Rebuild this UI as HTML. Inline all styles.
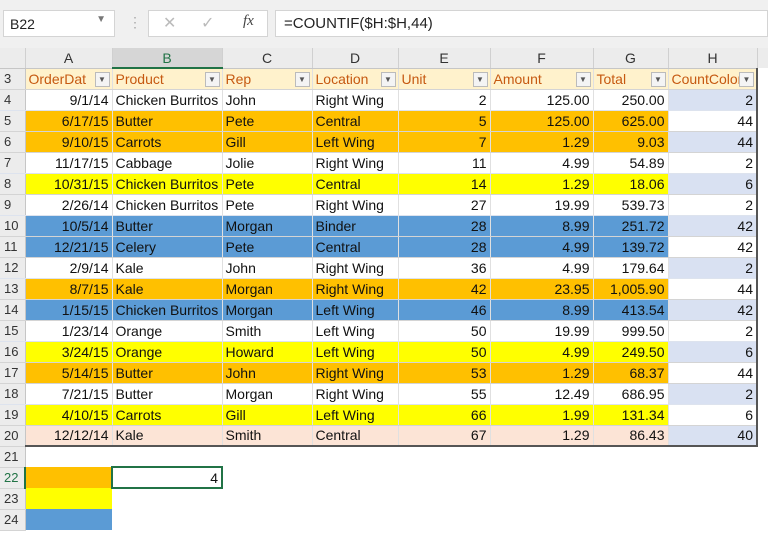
<!DOCTYPE html>
<html><head><meta charset="utf-8"><style>
*{margin:0;padding:0;box-sizing:border-box}
body{width:768px;height:538px;background:#fff;font-family:"Liberation Sans",Arial,sans-serif;position:relative;overflow:hidden}
.top{position:absolute;left:0;top:0;width:768px;height:48px;background:#f0f0f0}
.nb{position:absolute;left:3px;top:10px;width:112px;height:27px;background:#fff;border:1px solid #d4d4d4;font-size:14px;padding:5px 6px;color:#222}
.nb span{position:absolute;right:8px;top:3px;font-size:10px;color:#777}
.dots{position:absolute;left:128px;top:14px;color:#aaa;font-size:14px}
.fx{position:absolute;left:148px;top:10px;width:120px;height:27px;background:#fff;border:1px solid #d4d4d4;color:#bbb;font-size:16px}
.fb{position:absolute;left:275px;top:10px;width:493px;height:27px;background:#fff;border:1px solid #d4d4d4;font-size:15px;padding:4px 8px;color:#222}
table{position:absolute;left:0;top:48px;border-collapse:collapse;table-layout:fixed;font-size:14px}
td{height:21px;padding:0 3px;white-space:nowrap;overflow:hidden;border-bottom:1px solid #d4d4d4;border-right:1px solid #e0e0e0;color:#111}
tr.ch td{height:20px;background:#ececec;text-align:center;color:#333;border-right:1px solid #d0d0d0;border-bottom:1px solid #c6c6c6}
td.rh{background:#ececec;color:#333;text-align:left;padding-left:4px;font-size:13px;border-right:1px solid #c6c6c6}
.r{text-align:right}
tr.hd td:not(.rh){background:#fff2cc;color:#c65911;font-weight:normal;position:relative}
.dd{position:absolute;right:2px;top:3px;width:15px;height:15px;border:1px solid #bbb;background:#f4f4f4;font-size:8px;color:#555;text-align:center;line-height:13px}
.o td:not(.rh):not(.h){background:#ffc000}
.y td:not(.rh):not(.h){background:#ffff00}
.b td:not(.rh):not(.h){background:#5b9bd5}
.p td:not(.rh):not(.h){background:#fce4d6}
.w td{border-bottom-color:#dde3ee}
td.h{text-align:right;border-right:2px solid #555;background:#fff}
td.hb{background:#d9e1f2}
.last td:not(.rh){border-bottom:2px solid #555}
td.x,tr td.x{background:#fff !important;border:none !important}
</style></head><body>
<div class="top">
<div class="nb">B22<span>▼</span></div>
<div class="dots">⋮</div>
<div class="fx"><span style="position:absolute;left:14px;top:2px">✕</span><span style="position:absolute;left:52px;top:2px">✓</span><span style="position:absolute;left:94px;top:2px;color:#444;font-style:italic;font-family:'Liberation Serif',serif;font-size:15px">fx</span></div>
<div class="fb">=COUNTIF($H:$H,44)</div>
</div>
<table>
<colgroup><col style="width:25px"><col style="width:87px"><col style="width:110px"><col style="width:90px"><col style="width:86px"><col style="width:92px"><col style="width:103px"><col style="width:75px"><col style="width:89px"><col style="width:11px"></colgroup>
<tr class="ch"><td></td><td>A</td><td style="background:#d6d6d6;color:#217346;border-bottom:2px solid #217346">B</td><td>C</td><td>D</td><td>E</td><td>F</td><td>G</td><td>H</td><td style="border:none;background:#ececec"></td></tr>
<tr class="hd"><td class="rh">3</td><td>OrderDat<span class="dd">▼</span></td><td>Product<span class="dd">▼</span></td><td>Rep<span class="dd">▼</span></td><td>Location<span class="dd">▼</span></td><td>Unit<span class="dd">▼</span></td><td>Amount<span class="dd">▼</span></td><td>Total<span class="dd">▼</span></td><td style="border-right:2px solid #555">CountColor<span class="dd">▼</span></td><td class="x"></td></tr>
<tr class="w"><td class="rh">4</td><td class="r">9/1/14</td><td>Chicken Burritos</td><td>John</td><td>Right Wing</td><td class="r">2</td><td class="r">125.00</td><td class="r">250.00</td><td class="h hb">2</td><td class="x"></td></tr>
<tr class="o"><td class="rh">5</td><td class="r">6/17/15</td><td>Butter</td><td>Pete</td><td>Central</td><td class="r">5</td><td class="r">125.00</td><td class="r">625.00</td><td class="h">44</td><td class="x"></td></tr>
<tr class="o"><td class="rh">6</td><td class="r">9/10/15</td><td>Carrots</td><td>Gill</td><td>Left Wing</td><td class="r">7</td><td class="r">1.29</td><td class="r">9.03</td><td class="h hb">44</td><td class="x"></td></tr>
<tr class="w"><td class="rh">7</td><td class="r">11/17/15</td><td>Cabbage</td><td>Jolie</td><td>Right Wing</td><td class="r">11</td><td class="r">4.99</td><td class="r">54.89</td><td class="h">2</td><td class="x"></td></tr>
<tr class="y"><td class="rh">8</td><td class="r">10/31/15</td><td>Chicken Burritos</td><td>Pete</td><td>Central</td><td class="r">14</td><td class="r">1.29</td><td class="r">18.06</td><td class="h hb">6</td><td class="x"></td></tr>
<tr class="w"><td class="rh">9</td><td class="r">2/26/14</td><td>Chicken Burritos</td><td>Pete</td><td>Right Wing</td><td class="r">27</td><td class="r">19.99</td><td class="r">539.73</td><td class="h">2</td><td class="x"></td></tr>
<tr class="b"><td class="rh">10</td><td class="r">10/5/14</td><td>Butter</td><td>Morgan</td><td>Binder</td><td class="r">28</td><td class="r">8.99</td><td class="r">251.72</td><td class="h hb">42</td><td class="x"></td></tr>
<tr class="b"><td class="rh">11</td><td class="r">12/21/15</td><td>Celery</td><td>Pete</td><td>Central</td><td class="r">28</td><td class="r">4.99</td><td class="r">139.72</td><td class="h">42</td><td class="x"></td></tr>
<tr class="w"><td class="rh">12</td><td class="r">2/9/14</td><td>Kale</td><td>John</td><td>Right Wing</td><td class="r">36</td><td class="r">4.99</td><td class="r">179.64</td><td class="h hb">2</td><td class="x"></td></tr>
<tr class="o"><td class="rh">13</td><td class="r">8/7/15</td><td>Kale</td><td>Morgan</td><td>Right Wing</td><td class="r">42</td><td class="r">23.95</td><td class="r">1,005.90</td><td class="h">44</td><td class="x"></td></tr>
<tr class="b"><td class="rh">14</td><td class="r">1/15/15</td><td>Chicken Burritos</td><td>Morgan</td><td>Left Wing</td><td class="r">46</td><td class="r">8.99</td><td class="r">413.54</td><td class="h hb">42</td><td class="x"></td></tr>
<tr class="w"><td class="rh">15</td><td class="r">1/23/14</td><td>Orange</td><td>Smith</td><td>Left Wing</td><td class="r">50</td><td class="r">19.99</td><td class="r">999.50</td><td class="h">2</td><td class="x"></td></tr>
<tr class="y"><td class="rh">16</td><td class="r">3/24/15</td><td>Orange</td><td>Howard</td><td>Left Wing</td><td class="r">50</td><td class="r">4.99</td><td class="r">249.50</td><td class="h hb">6</td><td class="x"></td></tr>
<tr class="o"><td class="rh">17</td><td class="r">5/14/15</td><td>Butter</td><td>John</td><td>Right Wing</td><td class="r">53</td><td class="r">1.29</td><td class="r">68.37</td><td class="h">44</td><td class="x"></td></tr>
<tr class="w"><td class="rh">18</td><td class="r">7/21/15</td><td>Butter</td><td>Morgan</td><td>Right Wing</td><td class="r">55</td><td class="r">12.49</td><td class="r">686.95</td><td class="h hb">2</td><td class="x"></td></tr>
<tr class="y"><td class="rh">19</td><td class="r">4/10/15</td><td>Carrots</td><td>Gill</td><td>Left Wing</td><td class="r">66</td><td class="r">1.99</td><td class="r">131.34</td><td class="h">6</td><td class="x"></td></tr>
<tr class="p last"><td class="rh">20</td><td class="r">12/12/14</td><td>Kale</td><td>Smith</td><td>Central</td><td class="r">67</td><td class="r">1.29</td><td class="r">86.43</td><td class="h hb">40</td><td class="x"></td></tr>
<tr><td class="rh">21</td><td style="border:none"></td><td style="border:none"></td><td colspan="7" style="border:none"></td></tr>
<tr><td class="rh" style="color:#217346;border-right:2px solid #217346">22</td><td style="background:#ffc000;border:none"></td><td class="r" style="border:2px solid #217346">4</td><td colspan="7" style="border:none"></td></tr>
<tr><td class="rh">23</td><td style="background:#ffff00;border:none"></td><td colspan="8" style="border:none"></td></tr>
<tr><td class="rh">24</td><td style="background:#5b9bd5;border:none"></td><td colspan="8" style="border:none"></td></tr>
</table>
</body></html>
